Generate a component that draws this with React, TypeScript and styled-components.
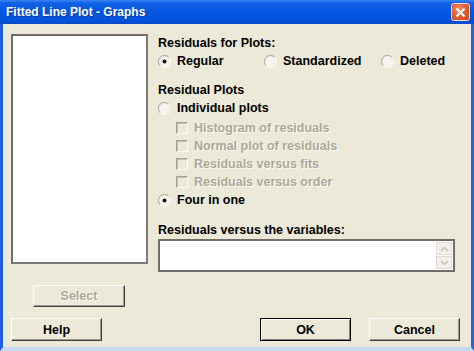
import React from 'react';
import styled, { createGlobalStyle } from 'styled-components';

const GlobalStyle = createGlobalStyle`
  html, body {
    margin: 0;
    padding: 0;
    background: #ece9d8;
  }
  * {
    box-sizing: border-box;
  }
`;

const Window = styled.div`
  width: 474px;
  height: 351px;
  display: flex;
  flex-direction: column;
  font-family: "Liberation Sans", Arial, sans-serif;
  font-weight: bold;
  font-size: 12.5px;
  color: #000;
  overflow: hidden;
`;

const TitleBar = styled.div`
  height: 24px;
  flex: none;
  display: flex;
  align-items: center;
  padding: 0 4px 0 6px;
  background: linear-gradient(#3b86f2 0%, #1162e6 12%, #0456e0 50%, #0453dc 85%, #0a49c8 100%);
  color: #fff;
  font-size: 12px;
  text-shadow: 1px 1px 0 #0b3aa0;
`;

const Title = styled.span`
  flex: 1;
`;

const CloseButton = styled.div`
  width: 19px;
  height: 18px;
  border: 1px solid #f3d6cc;
  border-radius: 3px;
  background: radial-gradient(circle at 40% 35%, #f0936c 0%, #de5a2f 55%, #c8441c 100%);
  display: flex;
  align-items: center;
  justify-content: center;
`;

const Body = styled.div`
  flex: 1;
  display: flex;
  flex-direction: column;
  background: #ece9d8;
  border-left: 3px solid #1f5fdc;
  border-right: 3px solid #2a63d8;
  border-bottom: 4px solid #c9d8f3;
  padding: 11px 0 6px 8px;
`;

const TopSection = styled.div`
  display: flex;
`;

const LeftColumn = styled.div`
  width: 137px;
  display: flex;
  flex-direction: column;
  margin-top: -1px;
`;

const ListBox = styled.div`
  height: 230px;
  background: #fff;
  border: 2px solid #706e66;
  border-right-color: #7c7a72;
  border-bottom-color: #7c7a72;
`;

const RightColumn = styled.div`
  margin-left: 10px;
  width: 297px;
  display: flex;
  flex-direction: column;
`;

const Heading = styled.div<{ $top?: number }>`
  height: 17px;
  line-height: 17px;
  margin-top: ${(p) => p.$top ?? 0}px;
`;

const RadioGrid = styled.div`
  display: grid;
  grid-template-columns: 106px 117px auto;
  height: 18px;
`;

const Option = styled.label<{ $disabled?: boolean; $indent?: number }>`
  height: 18px;
  display: flex;
  align-items: center;
  gap: 6px;
  padding-left: ${(p) => p.$indent ?? 0}px;
  color: ${(p) => (p.$disabled ? '#aca899' : '#000')};
  text-shadow: ${(p) => (p.$disabled ? '1px 1px 0 #fbfaf5' : 'none')};
  white-space: nowrap;
`;

const CheckGroup = styled.div`
  margin-top: 2px;
  display: flex;
  flex-direction: column;
`;

const CheckBox = styled.span`
  width: 12px;
  height: 12px;
  flex: none;
  border: 1px solid;
  border-color: #a09e95 #fbfaf6 #fbfaf6 #a09e95;
  box-shadow: inset 1px 1px 0 #c4c1b6;
  background: #ece9d8;
`;

const TextBox = styled.div`
  height: 33px;
  background: #fff;
  border: 2px solid #706e66;
  display: flex;
  justify-content: flex-end;
  padding: 1px 1px 1px 0;
`;

const ScrollColumn = styled.div`
  width: 16px;
  display: flex;
  flex-direction: column;
  justify-content: space-between;
`;

const ScrollArrow = styled.div`
  height: 13px;
  background: #f2f0e8;
  border: 1px solid #e2dfd2;
  display: flex;
  align-items: center;
  justify-content: center;
`;

const Button = styled.button<{ $default?: boolean; $disabled?: boolean }>`
  width: 91px;
  height: 23px;
  padding: 0;
  font: inherit;
  background: #ece9d8;
  color: ${(p) => (p.$disabled ? '#aca899' : '#000')};
  text-shadow: ${(p) => (p.$disabled ? '1px 1px 0 #fff' : 'none')};
  border: 1px solid;
  border-color: ${(p) => (p.$default ? '#000' : '#fff #404040 #404040 #fff')};
  box-shadow: ${(p) =>
    p.$default
      ? 'inset 1px 1px 0 #fff, inset -1px -1px 0 #808080'
      : 'inset -1px -1px 0 #9d9b91'};
`;

const SelectButton = styled(Button)`
  margin: 21px 0 0 22px;
  width: 92px;
  height: 22px;
`;

const BottomRow = styled.div`
  margin-top: 11px;
  display: flex;
  padding-right: 11px;
`;

const Spacer = styled.div`
  flex: 1;
`;

const OkButton = styled(Button)`
  margin-right: 18px;
`;

const Radio = ({ checked }: { checked?: boolean }) => (
  <svg width="13" height="13" viewBox="0 0 13 13" style={{ flex: 'none' }}>
    <circle cx="6.5" cy="6.5" r="6" fill="#f0eee6" />
    <path d="M2.2 10.8 A6 6 0 0 1 10.8 2.2" fill="none" stroke="#a9a69b" strokeWidth="1" />
    <path d="M10.8 2.2 A6 6 0 0 1 2.2 10.8" fill="none" stroke="#fcfbf7" strokeWidth="1" />
    <circle cx="6.5" cy="6.5" r="4.5" fill="#f6f5ef" />
    {checked && <circle cx="6.5" cy="6.5" r="2" fill="#111" />}
  </svg>
);

const Chevron = ({ up }: { up?: boolean }) => (
  <svg width="9" height="6" viewBox="0 0 9 6">
    <path
      d={up ? 'M1 5 L4.5 1.5 L8 5' : 'M1 1 L4.5 4.5 L8 1'}
      fill="none"
      stroke="#c3c0b5"
      strokeWidth="1.5"
    />
  </svg>
);

const plotOptions = [
  'Histogram of residuals',
  'Normal plot of residuals',
  'Residuals versus fits',
  'Residuals versus order',
];

export default function App() {
  return (
    <>
      <GlobalStyle />
      <Window>
        <TitleBar>
          <Title>Fitted Line Plot - Graphs</Title>
          <CloseButton>
            <svg width="11" height="11" viewBox="0 0 11 11">
              <path d="M1.5 1.5 L9.5 9.5 M9.5 1.5 L1.5 9.5" stroke="#fff" strokeWidth="2" />
            </svg>
          </CloseButton>
        </TitleBar>
        <Body>
          <TopSection>
            <LeftColumn>
              <ListBox />
              <SelectButton $disabled>Select</SelectButton>
            </LeftColumn>
            <RightColumn>
              <Heading>Residuals for Plots:</Heading>
              <RadioGrid>
                <Option>
                  <Radio checked />
                  Regular
                </Option>
                <Option>
                  <Radio />
                  Standardized
                </Option>
                <Option>
                  <Radio />
                  Deleted
                </Option>
              </RadioGrid>
              <Heading $top={12}>Residual Plots</Heading>
              <Option>
                <Radio />
                Individual plots
              </Option>
              <CheckGroup>
                {plotOptions.map((label) => (
                  <Option key={label} $disabled $indent={18}>
                    <CheckBox />
                    {label}
                  </Option>
                ))}
              </CheckGroup>
              <Option>
                <Radio checked />
                Four in one
              </Option>
              <Heading $top={13}>Residuals versus the variables:</Heading>
              <TextBox>
                <ScrollColumn>
                  <ScrollArrow>
                    <Chevron up />
                  </ScrollArrow>
                  <ScrollArrow>
                    <Chevron />
                  </ScrollArrow>
                </ScrollColumn>
              </TextBox>
            </RightColumn>
          </TopSection>
          <BottomRow>
            <Button>Help</Button>
            <Spacer />
            <OkButton $default>OK</OkButton>
            <Button>Cancel</Button>
          </BottomRow>
        </Body>
      </Window>
    </>
  );
}
